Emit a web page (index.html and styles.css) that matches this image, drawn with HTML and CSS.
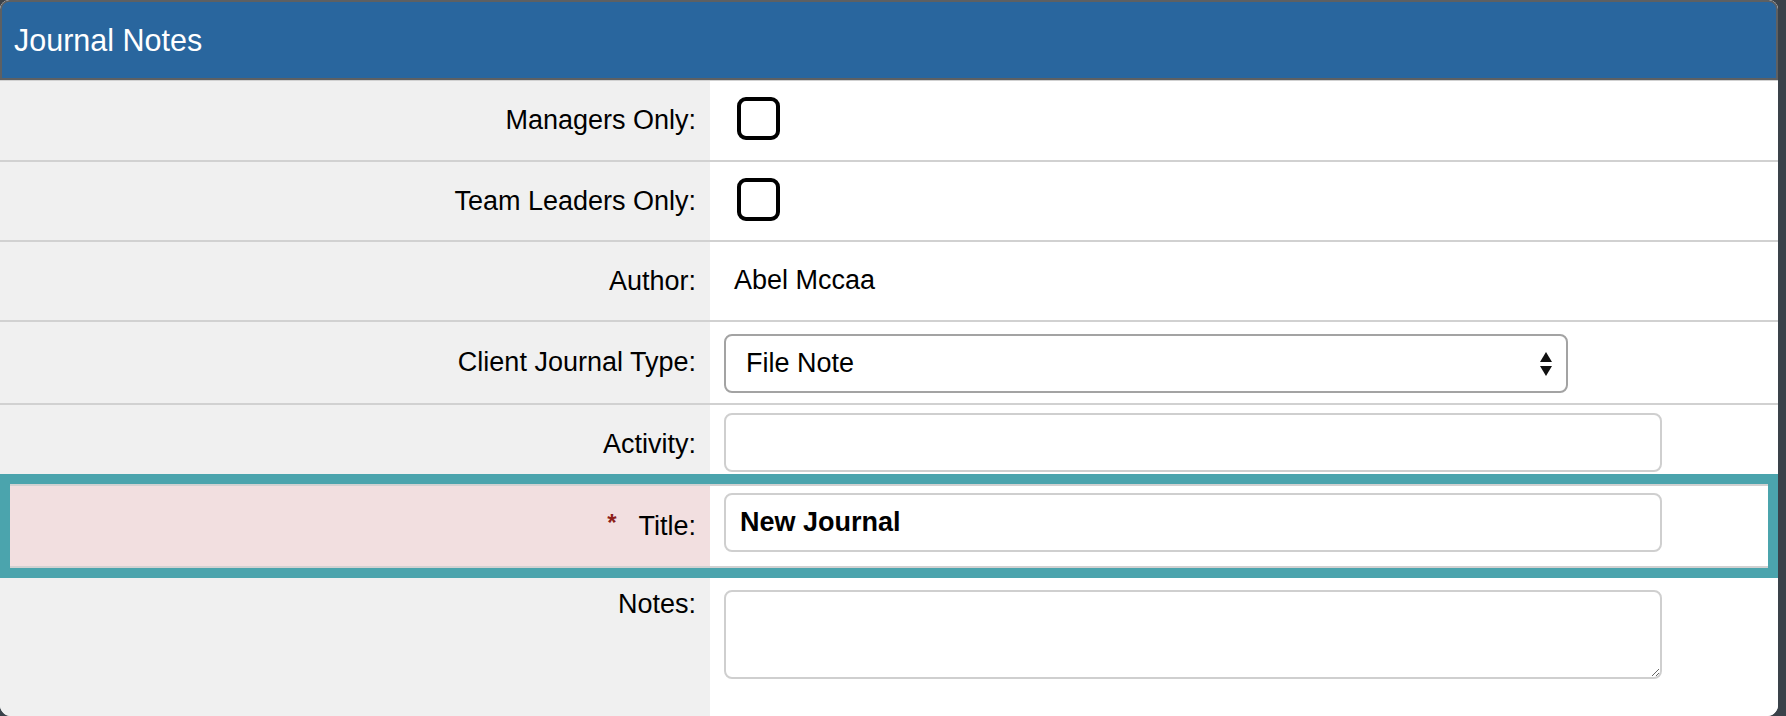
FILE: index.html
```html
<!DOCTYPE html>
<html>
<head>
<meta charset="utf-8">
<title>Journal Notes</title>
<link rel="stylesheet" href="styles.css">
</head>
<body>
<div class="panel">
  <div class="panel-heading">Journal Notes</div>
  <div class="panel-body">
    <div class="row row-first">
      <div class="label">Managers Only:</div>
      <div class="field"><input type="checkbox" class="check"></div>
    </div>
    <div class="row">
      <div class="label">Team Leaders Only:</div>
      <div class="field"><input type="checkbox" class="check"></div>
    </div>
    <div class="row">
      <div class="label">Author:</div>
      <div class="field"><span class="static">Abel Mccaa</span></div>
    </div>
    <div class="row row-select">
      <div class="label">Client Journal Type:</div>
      <div class="field">
        <div class="select">
          <span>File Note</span>
          <svg class="arrows" width="14" height="28" viewBox="0 0 14 28"><polygon points="1,12 7,2 13,12" fill="#111"/><polygon points="1,16 13,16 7,26" fill="#111"/></svg>
        </div>
      </div>
    </div>
    <div class="row row-plain">
      <div class="label">Activity:</div>
      <div class="field"><input type="text" class="text"></div>
    </div>
    <div class="row row-required">
      <div class="label"><span class="star">*</span>Title:</div>
      <div class="field"><input type="text" class="text text-bold" value="New Journal"></div>
    </div>
    <div class="row row-notes">
      <div class="label">Notes:</div>
      <div class="field"><textarea class="area"></textarea></div>
    </div>
  </div>
</div>
</body>
</html>
```
FILE: styles.css
```css
html, body { margin: 0; padding: 0; }
body {
  background-color: #3a424a;
  font-family: "Liberation Sans", Arial, Helvetica, sans-serif;
  font-size: 27px; color: #000;
  overflow: hidden;
}
.panel {
  width: 1778px; height: 716px;
  display: flex; flex-direction: column;
  border-radius: 9px 9px 11px 11px;
  overflow: hidden;
  background-color: #ffffff;
}
.panel-heading {
  box-sizing: border-box; height: 80px;
  display: flex; align-items: center;
  padding-left: 12px;
  background-color: #29669e; color: #ffffff;
  border: 2px solid #5e6062; border-radius: 9px 9px 0 0;
  font-size: 30.5px;
}
.panel-body { flex: 1; display: flex; flex-direction: column; }

.row { display: flex; border-bottom: 2px solid #d1d1d1; min-height: 78px; }
.row-first { border-top: 1px solid #d1d1d1; min-height: 79px; }
.row-select { min-height: 79px; }
.row-plain { border-bottom: 0; min-height: 79px; }
.label {
  box-sizing: border-box; width: 710px; flex: none;
  display: flex; align-items: center; justify-content: flex-end;
  padding-right: 14px;
  background-color: #f0f0f0;
}
.field {
  flex: 1; display: flex; align-items: center;
  padding: 9px 0 10px 14px;
  background-color: #ffffff;
}

.check {
  -webkit-appearance: none; appearance: none;
  box-sizing: border-box; width: 43px; height: 43px;
  margin: -3px 0 0 13px;
  border: 4px solid #000; border-radius: 9px;
  background: #fff;
}
.static { margin-left: 10px; }

.select {
  box-sizing: border-box; width: 844px; height: 59px;
  display: flex; align-items: center; justify-content: space-between;
  padding: 0 13px 0 20px; margin-top: 3px;
  border: 2px solid #a3a3a3; border-radius: 8px;
  background: #fff;
}
.arrows { display: block; }

.text, .area {
  box-sizing: border-box; width: 938px;
  border: 2px solid #cfcfcf; border-radius: 8px;
  font-family: inherit; font-size: 27px; color: #000;
  background: #fff; outline: none;
}
.text { height: 59px; padding: 0 14px; }
.text-bold { font-weight: bold; }
.row-plain .field { padding-top: 7px; padding-bottom: 12px; }

.row-required {
  margin: 0 10px;
  border-top: 2px solid #d1d1d1;
  outline: 10px solid #4ba4ad;
  position: relative; z-index: 1;
}
.row-required .label { width: 700px; background-color: #f2dfe0; }
.row-required .field { padding-top: 7px; padding-bottom: 14px; }
.star { color: #8e1f1b; font-weight: bold; font-size: 24px; margin-right: 22px; position: relative; top: -3px; }

.row-notes { flex: 1; border-bottom: 0; }
.row-notes .label { align-items: flex-start; padding-top: 21px; }
.row-notes .field { align-items: flex-start; padding-top: 22px; }
.area { height: 89px; resize: both; }
```
